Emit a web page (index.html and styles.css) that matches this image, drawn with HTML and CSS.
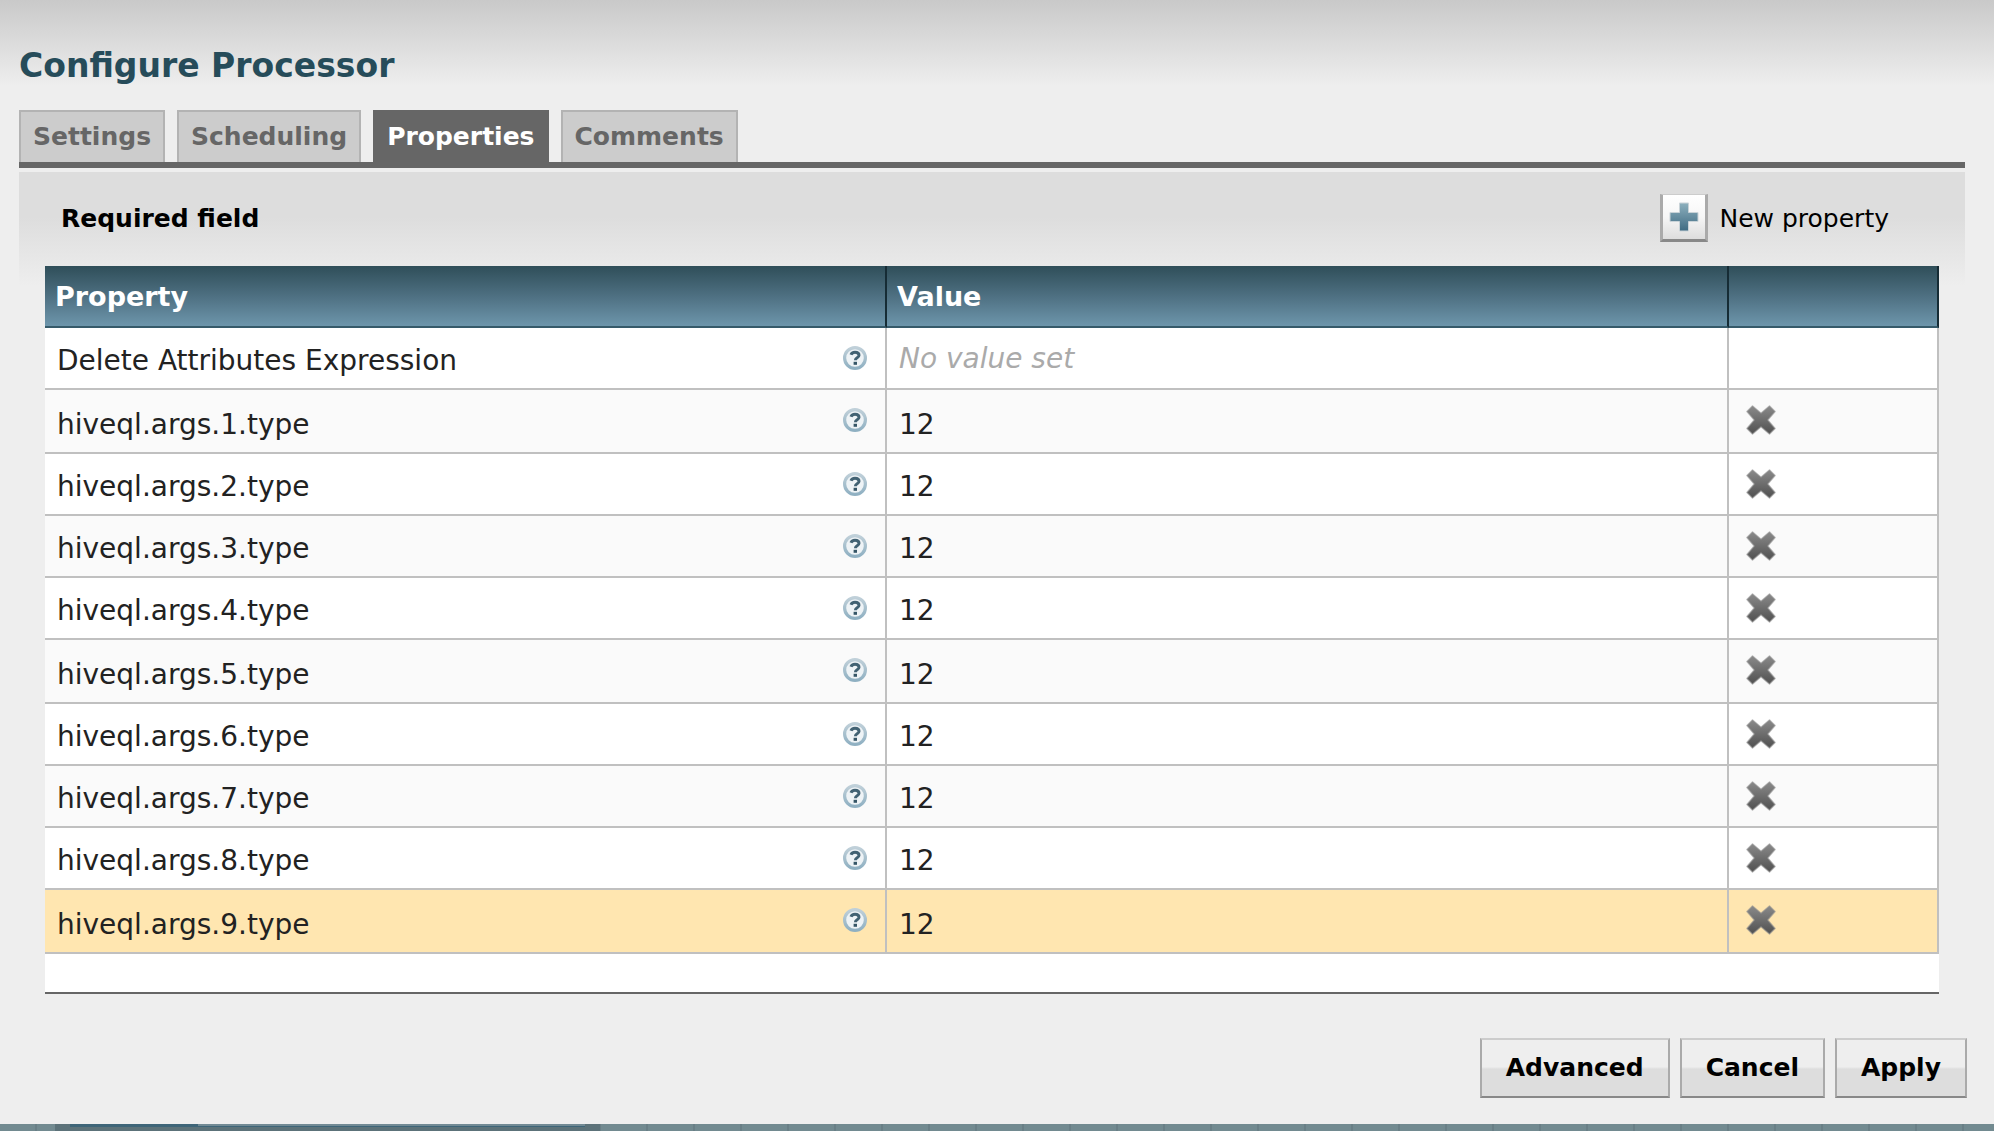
FILE: index.html
```html
<!DOCTYPE html>
<html lang="en">
<head>
    <meta charset="UTF-8">
    <meta name="viewport" content="width=device-width, initial-scale=1.0">
    <title>Configure Processor</title>
    <link rel="stylesheet" href="styles.css">
</head>
<body>

    <!-- shared icons -->
    <svg class="icon-defs" aria-hidden="true">
        <defs>
            <linearGradient id="ring" x1="0" y1="0" x2="0" y2="1">
                <stop offset="0" stop-color="#c0d0d9"/>
                <stop offset="1" stop-color="#8fb0c2"/>
            </linearGradient>
            <linearGradient id="cross" x1="0" y1="0" x2="0" y2="1">
                <stop offset="0" stop-color="#8a8a8a"/>
                <stop offset="1" stop-color="#505050"/>
            </linearGradient>
            <linearGradient id="plus" x1="0" y1="0" x2="0" y2="1">
                <stop offset="0" stop-color="#8db0be"/>
                <stop offset="1" stop-color="#3f6b82"/>
            </linearGradient>
            <symbol id="icon-help" viewBox="0 0 24 24">
                <circle cx="12" cy="12" r="10.4" fill="#eef3f6" stroke="url(#ring)" stroke-width="3.2"/>
                <path d="M8 8.800C8.600 6.800 10 6.200 12 6.200c2.400 0 4 1 4 3 0 2.800-3.600 2.400-3.600 5" fill="none" stroke="#426273" stroke-width="3"/>
                <rect x="10.600" y="15.800" width="3.400" height="3" fill="#355566"/>
            </symbol>
            <symbol id="icon-delete" viewBox="0 0 30 30">
                <path d="M6.500 1 15 8.300 23.500 1 29 6.500 21.700 15 29 23.500 23.500 29 15 21.700 6.500 29 1 23.500 8.300 15 1 6.500Z" fill="url(#cross)" stroke="#8c8c8c" stroke-opacity="0.6" stroke-width="1.500" stroke-linejoin="round"/>
            </symbol>
            <symbol id="icon-add" viewBox="0 0 30 30">
                <path d="M10.500 1h9v9.500H29v9h-9.500V29h-9v-9.500H1v-9h9.500z" fill="url(#plus)" stroke="#c9d3d8" stroke-width="1"/>
            </symbol>
        </defs>
    </svg>

    <main class="dialog">
        <h1>Configure Processor</h1>

        <nav class="tabs">
            <button class="tab">Settings</button>
            <button class="tab">Scheduling</button>
            <button class="tab selected">Properties</button>
            <button class="tab">Comments</button>
        </nav>

        <section class="panel">
            <div class="panel-header">
                <span class="required">Required field</span>
                <div class="new-property">
                    <button class="add-button" id="add-property"><svg class="icon-add" aria-hidden="true"><use href="#icon-add"/></svg></button>
                    <label for="add-property">New property</label>
                </div>
            </div>

            <div class="table-container">
                <table class="properties">
                    <colgroup>
                        <col>
                        <col>
                        <col class="col-actions">
                    </colgroup>
                    <thead>
                        <tr>
                            <th>Property</th>
                            <th>Value</th>
                            <th></th>
                        </tr>
                    </thead>
                    <tbody>
                        <tr>
                            <td><div class="name"><span>Delete Attributes Expression</span><svg class="icon-help"><use href="#icon-help"/></svg></div></td>
                            <td><div class="unset">No value set</div></td>
                            <td></td>
                        </tr>
                        <tr>
                            <td><div class="name"><span>hiveql.args.1.type</span><svg class="icon-help"><use href="#icon-help"/></svg></div></td>
                            <td><div class="value">12</div></td>
                            <td><button class="delete-button" aria-label="Delete"><svg class="icon-delete"><use href="#icon-delete"/></svg></button></td>
                        </tr>
                        <tr>
                            <td><div class="name"><span>hiveql.args.2.type</span><svg class="icon-help"><use href="#icon-help"/></svg></div></td>
                            <td><div class="value">12</div></td>
                            <td><button class="delete-button" aria-label="Delete"><svg class="icon-delete"><use href="#icon-delete"/></svg></button></td>
                        </tr>
                        <tr>
                            <td><div class="name"><span>hiveql.args.3.type</span><svg class="icon-help"><use href="#icon-help"/></svg></div></td>
                            <td><div class="value">12</div></td>
                            <td><button class="delete-button" aria-label="Delete"><svg class="icon-delete"><use href="#icon-delete"/></svg></button></td>
                        </tr>
                        <tr>
                            <td><div class="name"><span>hiveql.args.4.type</span><svg class="icon-help"><use href="#icon-help"/></svg></div></td>
                            <td><div class="value">12</div></td>
                            <td><button class="delete-button" aria-label="Delete"><svg class="icon-delete"><use href="#icon-delete"/></svg></button></td>
                        </tr>
                        <tr>
                            <td><div class="name"><span>hiveql.args.5.type</span><svg class="icon-help"><use href="#icon-help"/></svg></div></td>
                            <td><div class="value">12</div></td>
                            <td><button class="delete-button" aria-label="Delete"><svg class="icon-delete"><use href="#icon-delete"/></svg></button></td>
                        </tr>
                        <tr>
                            <td><div class="name"><span>hiveql.args.6.type</span><svg class="icon-help"><use href="#icon-help"/></svg></div></td>
                            <td><div class="value">12</div></td>
                            <td><button class="delete-button" aria-label="Delete"><svg class="icon-delete"><use href="#icon-delete"/></svg></button></td>
                        </tr>
                        <tr>
                            <td><div class="name"><span>hiveql.args.7.type</span><svg class="icon-help"><use href="#icon-help"/></svg></div></td>
                            <td><div class="value">12</div></td>
                            <td><button class="delete-button" aria-label="Delete"><svg class="icon-delete"><use href="#icon-delete"/></svg></button></td>
                        </tr>
                        <tr>
                            <td><div class="name"><span>hiveql.args.8.type</span><svg class="icon-help"><use href="#icon-help"/></svg></div></td>
                            <td><div class="value">12</div></td>
                            <td><button class="delete-button" aria-label="Delete"><svg class="icon-delete"><use href="#icon-delete"/></svg></button></td>
                        </tr>
                        <tr class="selected">
                            <td><div class="name"><span>hiveql.args.9.type</span><svg class="icon-help"><use href="#icon-help"/></svg></div></td>
                            <td><div class="value">12</div></td>
                            <td><button class="delete-button" aria-label="Delete"><svg class="icon-delete"><use href="#icon-delete"/></svg></button></td>
                        </tr>
                    </tbody>
                </table>
            </div>
        </section>

        <div class="buttons">
            <button class="button">Advanced</button>
            <button class="button">Cancel</button>
            <button class="button">Apply</button>
        </div>
    </main>

    <!-- flow canvas behind the dialog -->
    <div class="canvas">
        <div class="processor">
            <div class="processor-stats"></div>
        </div>
    </div>

</body>
</html>
```

FILE: styles.css
```css
* {
    box-sizing: border-box;
}
body {
    margin: 0;
    min-height: 100vh;
    display: flex;
    flex-direction: column;
    font-family: Verdana, "DejaVu Sans", sans-serif;
    font-size: 25px;
    color: #000;
    background-color: #eee;
}
button {
    font-family: inherit;
    font-size: inherit;
    cursor: pointer;
}
.icon-defs {
    position: absolute;
    width: 0;
    height: 0;
}
.dialog {
    flex: 1;
    padding: 44px 29px 26px 19px;
    background: #eee linear-gradient(#c9c9c9, #eee) no-repeat 0 0 / 100% 86px;
}
h1 {
    margin: 0;
    font-size: 33px;
    line-height: 44px;
    color: #264c5a;
}

/* tabs */
.tabs {
    display: flex;
    gap: 12px;
    margin-top: 22px;
    border-bottom: 6px solid #666;
}
.tab {
    height: 52px;
    padding: 0 12px 2px;
    border: 2px solid #b3b3b3;
    border-bottom: none;
    background-color: #ccc;
    color: #666;
    font-weight: bold;
}
.tab.selected {
    background-color: #666;
    border-color: #666;
    color: #fff;
}

/* panel */
.panel {
    padding: 4px 26px 0;
    background: linear-gradient(#ddd, #ddd 40%, #eee) no-repeat 0 4px / 100% 114px;
}
.panel-header {
    display: flex;
    justify-content: space-between;
    align-items: center;
    height: 94px;
    padding: 0 50px 2px 16px;
}
.required {
    font-weight: bold;
}
.new-property {
    display: flex;
    align-items: center;
    gap: 12px;
}
.add-button {
    display: flex;
    align-items: center;
    justify-content: center;
    width: 48px;
    height: 48px;
    padding: 0;
    border: 3px solid #aaa;
    border-top: 1px solid #ccc;
    border-bottom-color: #888;
    background: linear-gradient(#fff, #f6f6f6 50%, #ddd);
}
.icon-add {
    width: 30px;
    height: 30px;
}

/* property table */
.table-container {
    padding-bottom: 38px;
    background-color: #fff;
    border-bottom: 2px solid #666;
}
.properties {
    width: 100%;
    table-layout: fixed;
    border-collapse: separate;
    border-spacing: 0;
    font-size: 28px;
    color: #222;
}
.col-actions {
    width: 210px;
}
.properties thead {
    background: linear-gradient(#2f4e59, #4f7183 50%, #6f98ae);
}
.properties th {
    height: 62px;
    padding: 0 10px;
    border-right: 2px solid #162c35;
    border-bottom: 2px solid #365a6a;
    font-size: 27px;
    text-align: left;
    color: #fff;
}
.properties td {
    height: 62px;
    padding: 0 12px;
    border-right: 2px solid #c0c0c0;
    border-bottom: 2px solid #c0c0c0;
    vertical-align: top;
}
.properties tbody tr:nth-child(even) {
    background-color: #fafafa;
}
.properties tbody tr:nth-child(4n+2) td {
    height: 64px;
}
.properties tbody tr.selected {
    background-color: #ffe6b0;
}
.name {
    display: flex;
    justify-content: space-between;
    padding-right: 6px;
}
.name span, .value {
    padding-top: 16px;
    line-height: 34px;
}
.properties tbody tr:nth-child(4n+2) .name span,
.properties tbody tr:nth-child(4n+2) .value {
    padding-top: 18px;
}
.unset {
    padding-top: 14px;
    line-height: 34px;
    font-style: italic;
    color: #aaa;
}
.icon-help {
    width: 24px;
    height: 24px;
    margin-top: 18px;
}
.delete-button {
    display: block;
    margin: 15px 0 0 5px;
    padding: 0;
    border: none;
    background: none;
}
.icon-delete {
    display: block;
    width: 30px;
    height: 30px;
}

/* dialog buttons */
.buttons {
    display: flex;
    justify-content: flex-end;
    gap: 10px;
    margin-top: 44px;
    margin-right: -2px;
}
.button {
    height: 60px;
    padding: 0 24px 2px;
    border: 2px solid #aaa;
    border-top-color: #ccc;
    border-bottom-color: #888;
    background: linear-gradient(#eee 48%, #ddd 52%);
    color: #000;
    font-weight: bold;
}

/* canvas strip */
.canvas {
    height: 7px;
    padding-left: 55px;
    background: repeating-linear-gradient(90deg, #728a90 0 35px, #697f86 35px 37px, #728a90 37px 47px);
}
.processor {
    width: 545px;
    height: 7px;
    padding: 0 15px;
    background-color: #5c7279;
}
.processor-stats {
    height: 3px;
    border-left: 128px solid #3e6578;
    border-bottom: 1px solid #3e6578;
    background-color: #728a94;
}
```
